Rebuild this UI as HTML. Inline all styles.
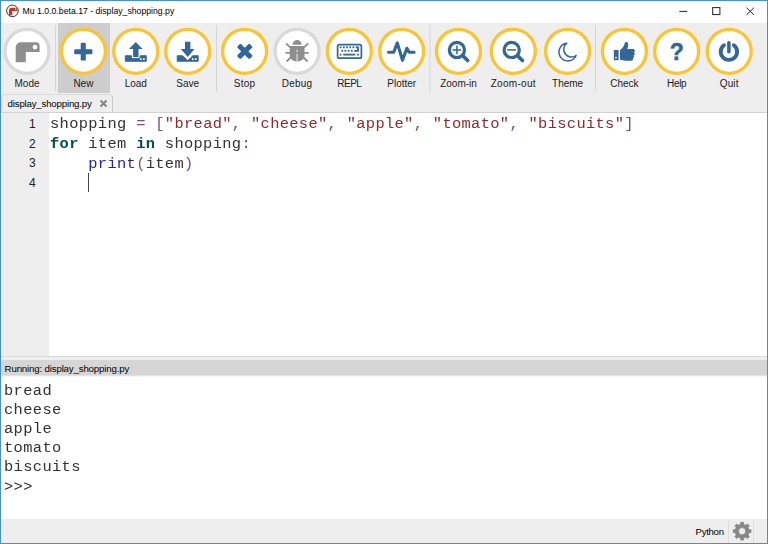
<!DOCTYPE html>
<html lang="en">
<head>
<meta charset="utf-8">
<title>Mu 1.0.0.beta.17 - display_shopping.py</title>
<style>
html,body{margin:0;padding:0;}
body{width:768px;height:544px;overflow:hidden;background:#fff;font-family:"Liberation Sans",sans-serif;}
#win{position:absolute;left:0;top:0;width:768px;height:544px;background:#fff;overflow:hidden;}
#win *{box-sizing:border-box;}
.abs{position:absolute;}
#frame{position:absolute;left:0;top:0;width:768px;height:544px;border:1px solid #4090dc;z-index:10;pointer-events:none;}
#title{position:absolute;left:22.6px;top:5.4px;font-size:8.7px;line-height:12px;color:#000;white-space:nowrap;}
#toolbar{position:absolute;left:0;top:23px;width:768px;height:71px;background:#eee;}
.lbl{position:absolute;width:80px;top:77px;text-align:center;font-size:10px;line-height:14px;color:#1a1a1a;white-space:nowrap;}
#tabbar{position:absolute;left:0;top:94px;width:768px;height:19px;background:#eee;border-bottom:1px solid #d2d2d2;}
#tab{position:absolute;left:1px;top:94px;width:112px;height:18px;border:1px solid #c8c8c8;border-top-color:#dadada;border-left-color:#dadada;border-bottom:none;border-radius:4px 4px 0 0;background:#eee;}
#tabtxt{position:absolute;left:7.6px;top:96.6px;font-size:9.7px;line-height:14px;color:#000;white-space:nowrap;letter-spacing:-0.2px;}
#tabx{position:absolute;left:98.7px;top:98.7px;width:9px;height:9px;}
#editor{position:absolute;left:0;top:113px;width:768px;height:243px;background:#fff;}
#gutter{position:absolute;left:0;top:113px;width:49px;height:243px;background:#eee;}
.mono{font-family:"Liberation Mono","DejaVu Sans Mono",monospace;}
.ln{position:absolute;left:0;width:35.6px;text-align:right;font-family:"Liberation Sans",sans-serif;font-size:12px;line-height:20px;color:#222;}
.code{position:absolute;left:50px;font-size:15.4px;letter-spacing:0.332px;line-height:20px;white-space:pre;color:#333;will-change:transform;}
.kw{color:#005050;font-weight:bold;}
.op{color:#7c4c7c;}
.str{color:#992626;}
.fn{color:#2222b4;}
#caret{position:absolute;left:88px;top:172.5px;width:1px;height:19.5px;background:#444;}
#split{position:absolute;left:0;top:356px;width:768px;height:4px;background:#efefef;border-top:1px solid #d9d9d9;}
#runhdr{position:absolute;left:0;top:360px;width:768px;height:16px;background:#d6d6d6;border-bottom:1px solid #e2e2e2;}
#runtxt{position:absolute;left:4.6px;top:361.6px;font-size:9.7px;line-height:14px;color:#000;white-space:nowrap;letter-spacing:-0.17px;}
#out{position:absolute;left:0;top:376px;width:768px;height:143px;background:#fff;border-top:1px solid #f6f6f6;}
.ol{position:absolute;left:4.2px;font-size:15.4px;letter-spacing:0.36px;line-height:19px;white-space:pre;color:#333;will-change:transform;}
#status{position:absolute;left:0;top:519px;width:768px;height:25px;background:#eee;}
#py{position:absolute;left:695.6px;top:524.8px;font-size:9.6px;line-height:14px;color:#000;letter-spacing:-0.3px;}
</style>
</head>
<body>
<div id="win">
  <div id="titlebar">
    <svg class="abs" style="left:0;top:0" width="24" height="22" viewBox="0 0 24 22">
      <circle cx="12.45" cy="10.9" r="5.8" fill="#fff" stroke="#333" stroke-width="1"/>
      <path d="M8.9 15.2V10.4C8.9 8.6 10 7.8 11.6 7.8H15.6C16.8 7.8 17.3 8.5 17.3 9.4V11H12.2V15.6Z" fill="#d0301e"/>
      <circle cx="15.6" cy="9.3" r="0.7" fill="#fff"/>
    </svg>
    <div id="title">Mu 1.0.0.beta.17 - display_shopping.py</div>
    <svg class="abs" style="left:660px;top:0" width="106" height="22" viewBox="0 0 106 22">
      <path d="M19.4 11.4H27.1" stroke="#222" stroke-width="1" fill="none"/>
      <rect x="52.7" y="7.6" width="7.2" height="7" stroke="#222" stroke-width="1" fill="none"/>
      <path d="M86.6 7.7L93.9 14.9M93.9 7.7L86.6 14.9" stroke="#222" stroke-width="1" fill="none"/>
    </svg>
  </div>
  <div id="toolbar"></div>
  <svg class="abs" style="left:0;top:0" width="768" height="96" viewBox="0 0 768 96">
<rect x="58" y="23" width="52" height="70" fill="#cdcdcd"/>
<rect x="55.0" y="25" width="1" height="66" fill="#d5d5d5"/>
<rect x="216.0" y="25" width="1" height="66" fill="#d5d5d5"/>
<rect x="429.5" y="25" width="1" height="66" fill="#d5d5d5"/>
<rect x="595.0" y="25" width="1" height="66" fill="#d5d5d5"/>
<circle cx="27.0" cy="51.3" r="22" fill="#fff" stroke="#d9d9d9" stroke-width="3.3"/>
<g transform="translate(27.0 51.3)"><path d="M-11.3 11V-3.5C-11.3 -7 -9 -9 -5.5 -9H9C11.5 -9 12.6 -7.5 12.6 -5.5V0.6H-1.2V11Z" fill="#8e8e8e"/><circle cx="8" cy="-4.2" r="2.4" fill="#fff"/></g>
<circle cx="83.4" cy="51.3" r="22" fill="#fff" stroke="#fcc431" stroke-width="3.3"/>
<g transform="translate(83.4 51.3)"><rect x="-9.2" y="-2.1" width="18.2" height="5" rx="1.2" fill="#336699"/><rect x="-2.7" y="-8.5" width="5.1" height="17.8" rx="1.2" fill="#336699"/></g>
<circle cx="135.8" cy="51.3" r="22" fill="#fff" stroke="#fcc431" stroke-width="3.3"/>
<g transform="translate(135.8 51.3)"><path d="M0 -9.3L6.8 -2.3H2.7V5.6H-2.7V-2.3H-6.8Z" fill="#336699"/><path d="M-10.5 4.4H-4.3V7.3H4.3V4.4H10.5V10H-10.5Z" fill="#336699" stroke="#336699" stroke-width="0.9" stroke-linejoin="round"/><rect x="4.2" y="7" width="1.7" height="1.7" fill="#fff"/><rect x="7.2" y="7" width="1.7" height="1.7" fill="#fff"/></g>
<circle cx="187.7" cy="51.3" r="22" fill="#fff" stroke="#fcc431" stroke-width="3.3"/>
<g transform="translate(187.7 51.3)"><path d="M-2.7 -9.6H2.7V-2.3H6.8L0 5.6L-6.8 -2.3H-2.7Z" fill="#336699"/><path d="M-10.5 4.4H-5.2L0 9.3L5.2 4.4H10.5V10H-10.5Z" fill="#336699" stroke="#336699" stroke-width="0.9" stroke-linejoin="round"/><rect x="4.2" y="7" width="1.7" height="1.7" fill="#fff"/><rect x="7.2" y="7" width="1.7" height="1.7" fill="#fff"/></g>
<circle cx="244.6" cy="51.3" r="22" fill="#fff" stroke="#fcc431" stroke-width="3.3"/>
<g transform="translate(244.6 51.3)"><g transform="translate(0.2 0.1)"><rect x="-8.8" y="-2.6" width="17.6" height="5.2" rx="1.2" fill="#336699" transform="rotate(45)"/><rect x="-8.8" y="-2.6" width="17.6" height="5.2" rx="1.2" fill="#336699" transform="rotate(-45)"/></g></g>
<circle cx="297.1" cy="51.3" r="22" fill="#fff" stroke="#d9d9d9" stroke-width="3.3"/>
<g transform="translate(297.1 51.3)"><path d="M-4.6 -6.5A4.6 4.8 0 0 1 4.6 -6.5Z" fill="#8e8e8e"/><path d="M-7.4 -5.2H7.4V4C7.4 8 4 10.2 0 10.2S-7.4 8 -7.4 4Z" fill="#8e8e8e"/><path d="M0 -1.5V10" stroke="#d8d8d8" stroke-width="1.3"/><path d="M-11.6 1.6H11.6M-11 -8L-7 -4M11 -8L7 -4M-10.5 10.2L-6.5 6.2M10.5 10.2L6.5 6.2" stroke="#8e8e8e" stroke-width="1.8" fill="none"/></g>
<circle cx="349.3" cy="51.3" r="22" fill="#fff" stroke="#fcc431" stroke-width="3.3"/>
<g transform="translate(349.3 51.3)"><rect x="-11.7" y="-6.7" width="23.8" height="13.6" rx="1.8" fill="#fff" stroke="#336699" stroke-width="1.7"/><rect x="-9.6" y="-4.9" width="1.8" height="1.8" fill="#336699"/><rect x="-6.4" y="-4.9" width="1.8" height="1.8" fill="#336699"/><rect x="-3.2" y="-4.9" width="1.8" height="1.8" fill="#336699"/><rect x="0" y="-4.9" width="1.8" height="1.8" fill="#336699"/><rect x="3.2" y="-4.9" width="1.8" height="1.8" fill="#336699"/><rect x="6.4" y="-4.9" width="1.8" height="1.8" fill="#336699"/><rect x="-8" y="-1.4" width="1.8" height="1.8" fill="#336699"/><rect x="-4.8" y="-1.4" width="1.8" height="1.8" fill="#336699"/><rect x="-1.6" y="-1.4" width="1.8" height="1.8" fill="#336699"/><rect x="1.6" y="-1.4" width="1.8" height="1.8" fill="#336699"/><rect x="-9.6" y="2.4" width="1.8" height="1.8" fill="#336699"/><rect x="-6" y="2.4" width="12" height="1.8" fill="#336699"/><rect x="7.8" y="2.4" width="1.8" height="1.8" fill="#336699"/><path d="M8.7 -4.9V-0.5H5" stroke="#336699" stroke-width="1.8" fill="none"/></g>
<circle cx="401.7" cy="51.3" r="22" fill="#fff" stroke="#fcc431" stroke-width="3.3"/>
<g transform="translate(401.7 51.3)"><path d="M-13.2 1H-8L-4.4 -8.4L0.8 9L5.2 -3L7.4 1H12.4" stroke="#336699" stroke-width="3.1" stroke-linecap="round" stroke-linejoin="round" fill="none"/></g>
<circle cx="458.5" cy="51.3" r="22" fill="#fff" stroke="#fcc431" stroke-width="3.3"/>
<g transform="translate(458.5 51.3)"><circle cx="-1.6" cy="-1.4" r="7.6" fill="#fff" stroke="#336699" stroke-width="3.2"/><path d="M4.6 4.8L9.2 9.2" stroke="#336699" stroke-width="3.6" stroke-linecap="round"/><path d="M-6 -1.4H2.8M-1.6 -5.8V3" stroke="#336699" stroke-width="1.5"/></g>
<circle cx="513.3" cy="51.3" r="22" fill="#fff" stroke="#fcc431" stroke-width="3.3"/>
<g transform="translate(513.3 51.3)"><circle cx="-1.6" cy="-1.4" r="7.6" fill="#fff" stroke="#336699" stroke-width="3.2"/><path d="M4.6 4.8L9.2 9.2" stroke="#336699" stroke-width="3.6" stroke-linecap="round"/><path d="M-6 -1.4H2.8" stroke="#336699" stroke-width="1.5"/></g>
<circle cx="567.6" cy="51.3" r="22" fill="#fff" stroke="#fcc431" stroke-width="3.3"/>
<g transform="translate(567.6 51.3)"><path d="M-0.8 -8.1A8.9 8.9 0 1 0 8.5 4.2A7.2 7.2 0 0 1 -0.8 -8.1Z" fill="#fff" stroke="#336699" stroke-width="1.5" stroke-linejoin="round"/></g>
<circle cx="624.4" cy="51.3" r="22" fill="#fff" stroke="#fcc431" stroke-width="3.3"/>
<g transform="translate(624.4 51.3)"><rect x="-10.6" y="-1.4" width="4.8" height="10.4" rx="0.6" fill="#336699"/><rect x="-9.2" y="5.6" width="1.5" height="1.5" fill="#fff"/><path d="M-4.4 -1C-2 -2.6 -0.4 -5.2 0.4 -8.2C0.8 -9.8 3.6 -9.8 3.8 -7C4 -5 3.2 -3.4 2.8 -2.2H8.6C10.8 -2.2 11 0.6 9.6 1.2C10.8 2 10.4 3.8 9.2 4.2C10 5.2 9.6 6.6 8.6 7C9 8.2 8.2 9.4 6.6 9.4H1C-1 9.4 -2.6 8.6 -4.4 8.4Z" fill="#336699"/></g>
<circle cx="676.7" cy="51.3" r="22" fill="#fff" stroke="#fcc431" stroke-width="3.3"/>
<g transform="translate(676.7 51.3)"><text x="0" y="8.3" text-anchor="middle" font-family="Liberation Sans, sans-serif" font-weight="bold" font-size="23" fill="#336699" stroke="#336699" stroke-width="0.5">?</text></g>
<circle cx="729.2" cy="51.3" r="22" fill="#fff" stroke="#fcc431" stroke-width="3.3"/>
<g transform="translate(729.2 51.3)"><g transform="translate(-0.3 0.4)"><path d="M-5 -6.5A8.2 8.2 0 1 0 5 -6.5" stroke="#336699" stroke-width="3.9" stroke-linecap="round" fill="none"/><path d="M0 -9V0" stroke="#336699" stroke-width="3.5" stroke-linecap="round"/></g></g>
</svg>
  <div class="lbl" style="left:-13.0px">Mode</div><div class="lbl" style="left:43.4px">New</div><div class="lbl" style="left:95.8px">Load</div><div class="lbl" style="left:147.7px">Save</div><div class="lbl" style="left:204.6px;letter-spacing:0.25px">Stop</div><div class="lbl" style="left:257.1px;letter-spacing:0.2px">Debug</div><div class="lbl" style="left:309.3px;letter-spacing:-0.5px">REPL</div><div class="lbl" style="left:361.7px">Plotter</div><div class="lbl" style="left:418.5px">Zoom-in</div><div class="lbl" style="left:473.3px;letter-spacing:0.3px">Zoom-out</div><div class="lbl" style="left:527.6px">Theme</div><div class="lbl" style="left:584.4px">Check</div><div class="lbl" style="left:636.7px;letter-spacing:-0.3px">Help</div><div class="lbl" style="left:689.2px;letter-spacing:0.15px">Quit</div>
  <div id="tabbar"></div>
  <div id="tab"></div>
  <div id="tabtxt">display_shopping.py</div>
  <svg id="tabx" viewBox="0 0 9 9"><path d="M1.5 1.5L7.5 7.5M7.5 1.5L1.5 7.5" stroke="#858585" stroke-width="2" fill="none"/></svg>
  <div id="editor"></div>
  <div id="gutter"></div>
  <div class="ln" style="top:113.7px">1</div>
  <div class="ln" style="top:133.5px">2</div>
  <div class="ln" style="top:153.3px">3</div>
  <div class="ln" style="top:173.1px">4</div>
  <div class="code mono" style="top:114.0px">shopping <span class="op">=</span> <span class="op">[</span><span class="str">"bread"</span><span class="op">,</span> <span class="str">"cheese"</span><span class="op">,</span> <span class="str">"apple"</span><span class="op">,</span> <span class="str">"tomato"</span><span class="op">,</span> <span class="str">"biscuits"</span><span class="op">]</span></div>
  <div class="code mono" style="top:133.8px"><span class="kw">for</span> item <span class="kw">in</span> shopping<span class="op">:</span></div>
  <div class="code mono" style="top:153.6px">    <span class="fn">print</span><span class="op">(</span>item<span class="op">)</span></div>
  <div id="caret"></div>
  <div id="split"></div>
  <div id="runhdr"></div>
  <div id="runtxt">Running: display_shopping.py</div>
  <div id="out"></div>
  <div class="ol mono" style="top:381.5px">bread</div>
  <div class="ol mono" style="top:400.7px">cheese</div>
  <div class="ol mono" style="top:419.9px">apple</div>
  <div class="ol mono" style="top:439.1px">tomato</div>
  <div class="ol mono" style="top:458.3px">biscuits</div>
  <div class="ol mono" style="top:477.5px">&gt;&gt;&gt; </div>
  <div id="status"></div>
  <div id="py">Python</div>
  <svg class="abs" style="left:720px;top:519px" width="48" height="25" viewBox="720 519 48 25"><rect x="728" y="520" width="1" height="23" fill="#dedede"/><rect x="753" y="520" width="1" height="23" fill="#dedede"/><path d="M740.63 524.36L740.69 522.31L743.51 522.31L743.57 524.36L745.90 525.32L747.39 523.92L749.38 525.91L747.98 527.40L748.94 529.73L750.99 529.79L750.99 532.61L748.94 532.67L747.98 535.00L749.38 536.49L747.39 538.48L745.90 537.08L743.57 538.04L743.51 540.09L740.69 540.09L740.63 538.04L738.30 537.08L736.81 538.48L734.82 536.49L736.22 535.00L735.26 532.67L733.21 532.61L733.21 529.79L735.26 529.73L736.22 527.40L734.82 525.91L736.81 523.92L738.30 525.32ZM745.70 531.20A3.6 3.6 0 1 0 738.50 531.20A3.6 3.6 0 1 0 745.70 531.20Z" fill="#868686" fill-rule="evenodd" stroke="#868686" stroke-width="0.8" stroke-linejoin="round"/></svg>
  <div id="frame"></div>
</div>
</body>
</html>
